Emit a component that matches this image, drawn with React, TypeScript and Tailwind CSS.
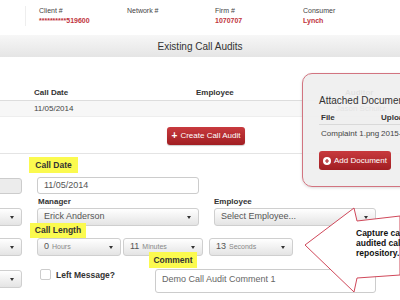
import React from "react";

const Caret = () => (
  <span className="ml-auto mr-[7px] h-0 w-0 border-x-[2.5px] border-t-[3px] border-x-transparent border-t-[#333]"></span>
);

const Select = ({ className = "", children }: { className?: string; children?: React.ReactNode }) => (
  <div
    className={`flex items-center h-[18px] rounded-[3px] border border-[#cfcfcf] bg-gradient-to-b from-white to-[#e4e4e4] text-[9px] text-[#555] pl-[6px] whitespace-nowrap ${className}`}
  >
    {children}
    <Caret />
  </div>
);

const Highlight = ({ className = "", children }: { className?: string; children: React.ReactNode }) => (
  <div
    className={`relative z-10 flex items-center justify-center whitespace-nowrap bg-[#fbfa4f] text-[8.5px] font-bold text-[#333] ${className}`}
  >
    {children}
  </div>
);

const App = () => {
  const info = [
    { label: "Client #", value: "**********519600" },
    { label: "Network #", value: "" },
    { label: "Firm #", value: "1070707" },
    { label: "Consumer", value: "Lynch" },
  ];

  return (
    <div className="relative w-[400px] h-[300px] overflow-hidden bg-white font-['Liberation_Sans',Arial,sans-serif] text-[#333]">
      {/* Consumer info */}
      <div className="h-[35px] flex pl-[25px] pt-[6px]">
        <div className="flex border-l border-[#eee] h-[20px] pl-[13px]">
          {info.map((i) => (
            <div key={i.label} className="w-[88px] leading-[10px]">
              <div className="text-[7px] text-[#444]">{i.label}</div>
              <div className="text-[7px] font-bold text-[#c0343c]">{i.value}</div>
            </div>
          ))}
        </div>
      </div>

      {/* Band */}
      <div className="h-[22px] flex items-center justify-center bg-gradient-to-b from-[#f7f7f7] to-[#e5e5e5] text-[10px] text-[#333]">
        Existing Call Audits
      </div>

      {/* Existing audits table */}
      <div className="mt-[29px]">
        <div className="h-[15px] flex items-center text-[8px] font-bold text-[#333] border-b border-[#ddd]">
          <div className="w-[196px] pl-[34px]">Call Date</div>
          <div className="w-[149px]">Employee</div>
          <div>Auditor</div>
        </div>
        <div className="h-[16px] flex items-center text-[8px] text-[#444] bg-[#f7f7f7] border-b border-[#eee]">
          <div className="w-[196px] pl-[34px]">11/05/2014</div>
          <div className="w-[140px]"></div>
          <div>Jason Schultz</div>
        </div>
      </div>

      {/* Create button */}
      <div className="mt-[10px] pl-[167px]">
        <button className="flex items-center gap-[3px] h-[18px] w-[78px] justify-center rounded-[3px] bg-gradient-to-b from-[#c83a3e] to-[#a11d22] text-white text-[8px] shadow-[0_1px_1px_rgba(0,0,0,0.2)]">
          <span className="font-bold text-[10px] leading-none">+</span>
          Create Call Audit
        </button>
      </div>

      <div className="mt-[8px] border-t border-[#e4e4e4]"></div>

      {/* Form */}
      <div className="flex">
        <div className="w-[22px] flex flex-col">
          <div className="mt-[24px] h-[16px] -ml-[80px] w-[102px] rounded-[3px] border border-[#ccc] bg-[#ececec]"></div>
          <Select className="mt-[14px] -ml-[80px] w-[102px]" />
          <Select className="mt-[12px] -ml-[80px] w-[102px]" />
          <Select className="mt-[14px] -ml-[80px] w-[102px]" />
        </div>

        <div className="ml-[15px] flex flex-col">
          <Highlight className="mt-[3px] -ml-[8px] w-[49px] h-[16px]">Call Date</Highlight>
          <div className="mt-[4px] h-[17px] w-[162px] rounded-[3px] border border-[#ccc] bg-white flex items-center pl-[6px] text-[9px] text-[#555]">
            11/05/2014
          </div>
          <div className="mt-[2px] h-[12px] flex items-center text-[8px] font-bold text-[#333]">
            <div className="w-[177px] pl-[1px]">Manager</div>
            <div>Employee</div>
          </div>
          <div className="flex">
            <Select className="w-[162px]">Erick Anderson</Select>
            <Select className="ml-[15px] w-[162px]">Select Employee...</Select>
          </div>
          <Highlight className="-mt-[3px] -ml-[7px] w-[56px] h-[15px]">Call Length</Highlight>
          <div className="flex">
            <Select className="w-[84px]">
              0 <span className="ml-[3px] text-[7px] text-[#888]">Hours</span>
            </Select>
            <Select className="ml-[2px] w-[80px]">
              11 <span className="ml-[3px] text-[7px] text-[#888]">Minutes</span>
            </Select>
            <Select className="ml-[6px] w-[84px]">
              13 <span className="ml-[3px] text-[7px] text-[#888]">Seconds</span>
            </Select>
          </div>
          <Highlight className="-mt-[4px] ml-[112px] w-[48px] h-[16px]">Comment</Highlight>
          <div className="flex mt-[1px]">
            <div className="flex items-start w-[118px]">
              <span className="ml-[3px] h-[11px] w-[11px] rounded-[2px] border border-[#ccc] bg-white"></span>
              <span className="ml-[5px] mt-[1px] text-[8.5px] font-bold text-[#333] leading-[11px] whitespace-nowrap">
                Left Message?
              </span>
            </div>
            <div className="h-[24px] w-[221px] rounded-[3px] border border-[#ccc] bg-white pl-[6px] pt-[3px] text-[9px] text-[#666]">
              Demo Call Audit Comment 1
            </div>
          </div>
        </div>
      </div>

      {/* Attached documents panel */}
      <div className="absolute left-[302px] top-[73px] w-[130px] h-[114px] rounded-[10px] border border-[#d27480] bg-[#efefef]/[0.93] shadow-[0_1px_3px_rgba(0,0,0,0.15)] pl-[16px] pt-[20px] whitespace-nowrap">
        <div className="text-[10px] text-[#333] leading-[13px]">Attached Documents</div>
        <div className="mt-[4px] flex h-[14px] items-center text-[8px] font-bold text-[#333] border-b border-[#d9d9d9]">
          <div className="w-[62px] pl-[2px]">File</div>
          <div>Upload</div>
        </div>
        <div className="flex h-[18px] items-center text-[8px] text-[#444]">
          <div className="w-[62px] pl-[2px]">Complaint 1.png</div>
          <div>2015-05</div>
        </div>
        <button className="mt-[8px] flex items-center gap-[3px] h-[19px] w-[72px] justify-center rounded-[3px] bg-gradient-to-b from-[#c83a3e] to-[#a11d22] text-white text-[8px]">
          <svg width="8" height="8" viewBox="0 0 16 16">
            <circle cx="8" cy="8" r="8" fill="#fff" />
            <path d="M8 4v8M4 8h8" stroke="#b02a2f" strokeWidth="2.4" />
          </svg>
          Add Document
        </button>
      </div>

      {/* Callout arrow */}
      <svg className="absolute left-[300px] top-[200px]" width="100" height="100" viewBox="0 0 100 100">
        <polygon
          points="5,45 54,8 57,21 100,16 100,75 57,78 54,92"
          fill="#fff"
          stroke="#d0485a"
          strokeWidth="1"
        />
      </svg>
      <div className="absolute left-[356px] top-[228px] text-[8.5px] font-bold leading-[10px] text-[#111] whitespace-nowrap">
        <div>Capture call</div>
        <div>audited call</div>
        <div>repository.</div>
      </div>
    </div>
  );
};

export default App;
